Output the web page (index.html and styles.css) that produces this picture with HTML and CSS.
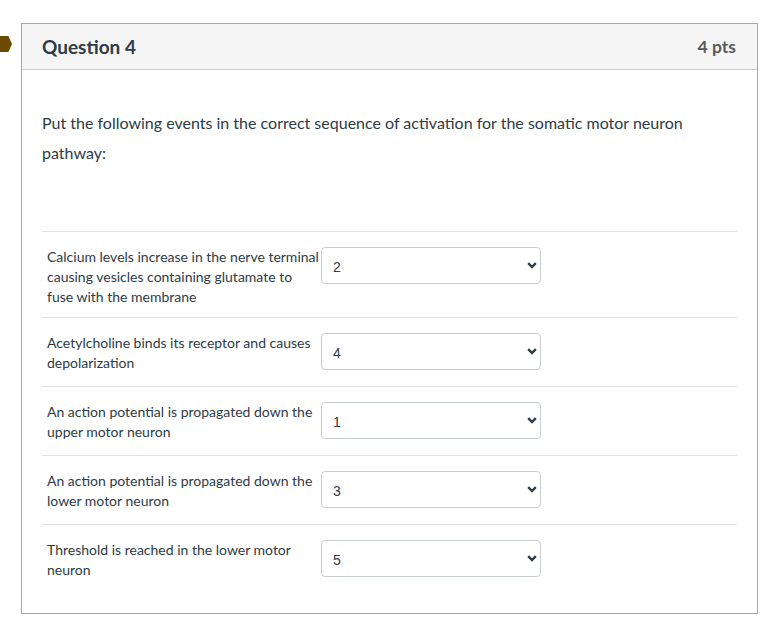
FILE: index.html
```html
<!DOCTYPE html>
<html>
<head>
<meta charset="utf-8">
<link rel="stylesheet" href="styles.css">
</head>
<body>
<div class="page">
  <div class="marker"></div>
  <div class="card">
    <div class="card-header">
      <h2 class="title">Question 4</h2>
      <div class="pts">4 pts</div>
    </div>
    <div class="card-body">
      <p class="prompt">Put the following events in the correct sequence of activation for the somatic motor neuron pathway:</p>
      <div class="rows">
        <div class="row">
          <div class="label">Calcium levels increase in the nerve terminal causing vesicles containing glutamate to fuse with the membrane</div>
          <div class="sel-wrap">
            <select class="sel"><option>2</option></select>
            <svg class="chev" width="10" height="7" viewBox="0 0 10 7"><path d="M1.2 1.2 L5 5 L8.8 1.2" fill="none" stroke="#2d3b45" stroke-width="2.4"/></svg>
          </div>
        </div>
        <div class="row">
          <div class="label">Acetylcholine binds its receptor and causes depolarization</div>
          <div class="sel-wrap">
            <select class="sel"><option>4</option></select>
            <svg class="chev" width="10" height="7" viewBox="0 0 10 7"><path d="M1.2 1.2 L5 5 L8.8 1.2" fill="none" stroke="#2d3b45" stroke-width="2.4"/></svg>
          </div>
        </div>
        <div class="row">
          <div class="label">An action potential is propagated down the upper motor neuron</div>
          <div class="sel-wrap">
            <select class="sel"><option>1</option></select>
            <svg class="chev" width="10" height="7" viewBox="0 0 10 7"><path d="M1.2 1.2 L5 5 L8.8 1.2" fill="none" stroke="#2d3b45" stroke-width="2.4"/></svg>
          </div>
        </div>
        <div class="row">
          <div class="label">An action potential is propagated down the lower motor neuron</div>
          <div class="sel-wrap">
            <select class="sel"><option>3</option></select>
            <svg class="chev" width="10" height="7" viewBox="0 0 10 7"><path d="M1.2 1.2 L5 5 L8.8 1.2" fill="none" stroke="#2d3b45" stroke-width="2.4"/></svg>
          </div>
        </div>
        <div class="row last">
          <div class="label">Threshold is reached in the lower motor neuron</div>
          <div class="sel-wrap">
            <select class="sel"><option>5</option></select>
            <svg class="chev" width="10" height="7" viewBox="0 0 10 7"><path d="M1.2 1.2 L5 5 L8.8 1.2" fill="none" stroke="#2d3b45" stroke-width="2.4"/></svg>
          </div>
        </div>
      </div>
    </div>
  </div>
</div>
</body>
</html>
```
FILE: styles.css
```css
html, body {
  margin: 0;
  padding: 0;
  background: #ffffff;
}
body {
  font-family: Lato, "Noto Sans", sans-serif;
  color: #2d3b45;
}
.page {
  position: relative;
  padding: 23px 0 0 21px;
  width: 737px;
}
.marker {
  position: absolute;
  left: 0;
  top: 36px;
  width: 12px;
  height: 16px;
  background: #6b4b00;
  clip-path: polygon(0 0, 70% 0, 100% 50%, 70% 100%, 0 100%);
}
.card {
  border: 1px solid #a8a8a8;
  box-sizing: border-box;
  width: 737px;
  height: 591px;
}
.card-header {
  display: flex;
  justify-content: space-between;
  align-items: center;
  height: 45px;
  padding: 0 21px 0 20px;
  background: #f5f5f5;
  border-bottom: 1px solid #c7cdd1;
}
.title {
  margin: 0 0 1px 0;
  font-size: 19px;
  font-weight: 700;
  color: #2d3b45;
}
.pts {
  font-size: 17.5px;
  font-weight: 700;
  color: #555a5e;
}
.card-body {
  padding: 38px 20px 0 20px;
}
.prompt {
  margin: 0;
  font-size: 16px;
  line-height: 30px;
  color: #2d3b45;
}
.rows {
  margin-top: 63px;
  border-top: 1px solid #dde1e3;
}
.row {
  display: flex;
  align-items: flex-start;
  padding: 15px 0 0 5px;
  border-bottom: 1px solid #dde1e3;
}
.row.last {
  border-bottom: none;
}
.label {
  width: 274px;
  font-size: 14px;
  line-height: 20px;
  color: #2d3b45;
  padding-bottom: 10px;
}
.sel-wrap {
  position: relative;
  margin-bottom: 16px;
}
.sel {
  appearance: none;
  -webkit-appearance: none;
  display: block;
  width: 220px;
  height: 37px;
  margin: 0;
  padding: 2px 0 0 11px;
  border: 1px solid #c7cdd1;
  border-radius: 4px;
  background: #ffffff;
  font-family: "Liberation Sans", Arial, sans-serif;
  font-size: 14px;
  color: #2d3b45;
}
.chev {
  position: absolute;
  top: 15px;
  right: 4px;
}
```
